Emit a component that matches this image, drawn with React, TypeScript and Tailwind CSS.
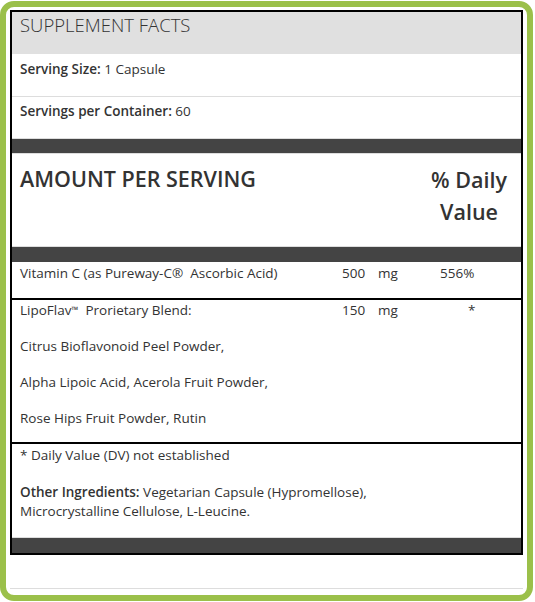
export default function App() {
  return (
    <div className="w-[535px] h-[602px] bg-white pt-px font-['Open_Sans',sans-serif] text-[#333]">
      <div className="w-[533px] h-[600px] rounded-[14px] border-[6px] border-[#9bc04a] px-[4px] pt-[3px]">
        <div className="border-2 border-black">
          <div className="h-[42px] bg-[#e0e0e0] pl-[8px] pt-px text-[18.5px] leading-[24px] font-light">
            SUPPLEMENT FACTS
          </div>
          <div className="h-[43px] border-b border-[#ddd] pl-[8px] pt-[5px] text-[13.5px]">
            <span className="font-semibold">Serving Size:</span> 1 Capsule
          </div>
          <div className="h-[42px] border-b border-[#ddd] pl-[8px] pt-[4px] text-[13.5px]">
            <span className="font-semibold">Servings per Container:</span> 60
          </div>
          <div className="h-[15px] bg-[#444] border-b border-[#ddd]" />
          <div className="h-[93px] flex justify-between pl-[8px] pr-[14px] pt-[10px] font-semibold border-b border-[#ddd]">
            <div className="text-[21.5px] leading-[30px]">AMOUNT PER SERVING</div>
            <div className="text-[21.5px] leading-[32px] text-center">
              % Daily
              <br />
              Value
            </div>
          </div>
          <div className="h-[15px] bg-[#444]" />
          <div className="h-[38px] flex pl-[8px] pt-[1px] text-[13.5px] border-b-2 border-black">
            <div className="w-[322px]">Vitamin C (as Pureway-C®&nbsp; Ascorbic Acid)</div>
            <div className="w-[36px]">500</div>
            <div className="w-[62px]">mg</div>
            <div>556%</div>
          </div>
          <div className="h-[144px] pl-[8px] pt-[1px] text-[13.5px] leading-[36px] border-b-2 border-black">
            <div className="flex leading-[18px]">
              <div className="w-[322px]">
                LipoFlav<span className="font-bold text-[9px] align-top">™</span>&nbsp; Prorietary Blend:
              </div>
              <div className="w-[36px]">150</div>
              <div className="w-[90px]">mg</div>
              <div>*</div>
            </div>
            <div className="mt-[9px]">Citrus Bioflavonoid Peel Powder,</div>
            <div>Alpha Lipoic Acid, Acerola Fruit Powder,</div>
            <div>Rose Hips Fruit Powder, Rutin</div>
          </div>
          <div className="h-[94px] pl-[8px] pt-[2px] text-[13.5px] leading-[19px] border-b border-[#ddd]">
            <div>* Daily Value (DV) not established</div>
            <div className="mt-[18px]">
              <span className="font-semibold">Other Ingredients:</span> Vegetarian Capsule (Hypromellose),
              <br />
              Microcrystalline Cellulose, L-Leucine.
            </div>
          </div>
          <div className="h-[15px] bg-[#444]" />
        </div>
        <div className="mt-[33px] border-b border-[#ddd]" />
      </div>
    </div>
  );
}
